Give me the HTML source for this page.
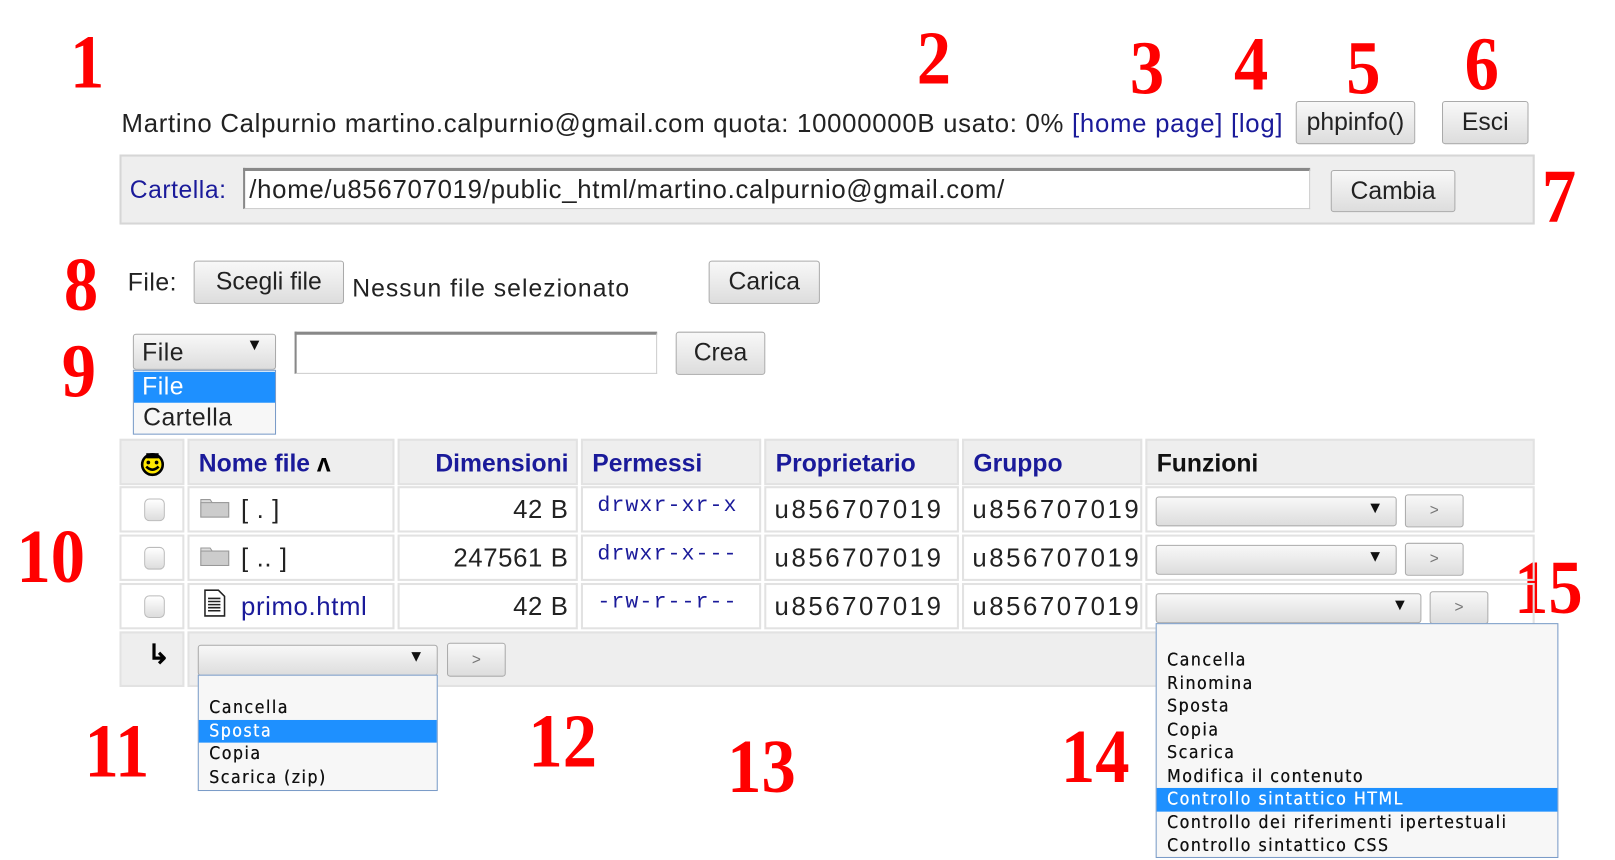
<!DOCTYPE html>
<html><head><meta charset="utf-8"><style>
html,body{margin:0;padding:0;background:#fff;width:1615px;height:860px;overflow:hidden}
#c{position:absolute;left:0;top:0;width:1560px;height:831px;transform:scale(1.030);transform-origin:0 0;font-family:"Liberation Sans",sans-serif;color:#222}
.a{position:absolute}
.n{position:absolute;font-family:"Liberation Serif",serif;font-weight:bold;color:#f00;font-size:74px;line-height:1;transform:scaleX(0.9);transform-origin:0 0}
.t{font-size:24px;white-space:nowrap;letter-spacing:0.5px}
.btn{position:absolute;border:1px solid #aaa;border-radius:3px;background:linear-gradient(#f8f8f8,#ddd);font-size:24px;text-align:center;box-sizing:border-box;color:#222}
.lnk{color:#1a1a9a}
.inp{position:absolute;background:#fff;border:1px solid #ccc;border-top:3px solid #888;border-left:2px solid #888;box-sizing:border-box}
.cell{position:absolute;border:2px solid #e2e2e2;box-sizing:border-box}
.hd{background:#eee;color:#1a1a9a;font-weight:bold;font-size:24px}
.sel{position:absolute;border:1px solid #aaa;border-radius:3px;background:linear-gradient(#f8f8f8,#ddd);box-sizing:border-box}
.sel:after{content:"▼";position:absolute;right:12px;top:2px;font-size:16px;color:#111}
.sb{position:absolute;border:1px solid #aaa;border-radius:3px;background:linear-gradient(#f8f8f8,#ddd);box-sizing:border-box;color:#777;font-size:15px;text-align:center}
.cb{position:absolute;width:20px;height:22px;border:1px solid #bbb;border-radius:5px;background:linear-gradient(#fff,#ddd);box-sizing:border-box}
.list{position:absolute;background:#f7f7f7;border:1px solid #7a9cc8;box-sizing:border-box;font-family:"DejaVu Sans Condensed","DejaVu Sans",sans-serif;font-size:17px;letter-spacing:1.5px;color:#111;text-shadow:0.3px 0 0 #111}
.list div{height:22.5px;line-height:22.5px;padding-left:10px}
.list .hl{text-shadow:0.3px 0 0 #fff}
.hl{background:#1e90ff;color:#fff}
.num{font-size:25px;white-space:nowrap;letter-spacing:0.6px}
.u{letter-spacing:2.5px}
.mono{font-family:"Liberation Mono",monospace;color:#1a1a9a;font-size:21px;letter-spacing:1px}
</style></head><body><div id="c">
<div class="n" style="left:68px;top:24px">1</div>
<div class="n" style="left:890px;top:20px">2</div>
<div class="n" style="left:1097px;top:30px">3</div>
<div class="n" style="left:1198px;top:26px">4</div>
<div class="n" style="left:1307px;top:30px">5</div>
<div class="n" style="left:1422px;top:26px">6</div>
<div class="n" style="left:1497px;top:154px">7</div>
<div class="n" style="left:62px;top:240px">8</div>
<div class="n" style="left:60px;top:324px">9</div>
<div class="n" style="left:16px;top:504px">10</div>
<div class="n" style="left:82px;top:693px">11</div>
<div class="n" style="left:513px;top:683px">12</div>
<div class="n" style="left:706px;top:708px">13</div>
<div class="n" style="left:1030px;top:698px">14</div>
<div class="n" style="left:1470px;top:534px">15</div>

<div class="a t" style="left:118px;top:106px;font-size:25px;letter-spacing:0.7px">Martino Calpurnio martino.calpurnio@gmail.com quota: 10000000B usato: 0% <span class="lnk">[home page] [log]</span></div>
<div class="btn" style="left:1258px;top:98px;width:116px;height:42px;line-height:40px">phpinfo()</div>
<div class="btn" style="left:1400px;top:98px;width:84px;height:42px;line-height:40px">Esci</div>

<div class="a" style="left:116px;top:150px;width:1374px;height:68px;background:#eee;border:2px solid #d6d6d6;box-sizing:border-box"></div>
<div class="a t lnk" style="left:126px;top:171px">Cartella:</div>
<div class="inp" style="left:236px;top:163px;width:1036px;height:40px"></div>
<div class="a t" style="left:242px;top:170px;font-size:25px;letter-spacing:0.7px">/home/u856707019/public_html/martino.calpurnio@gmail.com/</div>
<div class="btn" style="left:1292px;top:165px;width:121px;height:41px;line-height:39px">Cambia</div>

<div class="a t" style="left:124px;top:261px">File:</div>
<div class="btn" style="left:188px;top:253px;width:146px;height:42px;line-height:40px">Scegli file</div>
<div class="a t" style="left:342px;top:267px;letter-spacing:1px">Nessun file selezionato</div>
<div class="btn" style="left:688px;top:253px;width:108px;height:42px;line-height:40px">Carica</div>

<div class="sel" style="left:129px;top:324px;width:139px;height:35px"></div>
<div class="a t" style="left:138px;top:329px">File</div>
<div class="a" style="left:129px;top:359px;width:139px;height:63px;background:#f7f7f7;border:1px solid #7a9cc8;box-sizing:border-box"></div>
<div class="a t" style="left:130px;top:361px;width:137px;height:30px;background:#1e90ff;color:#fff;line-height:30px;text-indent:8px">File</div>
<div class="a t" style="left:139px;top:392px">Cartella</div>
<div class="inp" style="left:286px;top:322px;width:352px;height:41px"></div>
<div class="btn" style="left:656px;top:322px;width:87px;height:42px;line-height:40px">Crea</div>

<div class="cell hd" style="left:116px;top:426px;width:63px;height:45px"></div>
<svg class="a" style="left:135px;top:437px" width="26" height="26" viewBox="0 0 26 26"><circle cx="13" cy="14" r="10" fill="#ffe800" stroke="#000" stroke-width="2.5"/><rect x="7" y="3" width="12" height="5" fill="#000"/><circle cx="9" cy="12" r="1.8"/><circle cx="17" cy="12" r="1.8"/><path d="M7 16 Q13 22 19 16" stroke="#000" stroke-width="2.5" fill="none"/></svg>
<div class="cell hd" style="left:182px;top:426px;width:201px;height:45px;padding:9px 9px">Nome file <span style="color:#000">ʌ</span></div>
<div class="cell hd" style="left:386px;top:426px;width:175px;height:45px;padding:9px 7px;text-align:right">Dimensioni</div>
<div class="cell hd" style="left:564px;top:426px;width:175px;height:45px;padding:9px 9px">Permessi</div>
<div class="cell hd" style="left:742px;top:426px;width:189px;height:45px;padding:9px 9px">Proprietario</div>
<div class="cell hd" style="left:934px;top:426px;width:175px;height:45px;padding:9px 9px">Gruppo</div>
<div class="cell hd" style="left:1112px;top:426px;width:378px;height:45px;padding:9px 9px;color:#111">Funzioni</div>

<div class="cell" style="left:116px;top:472px;width:63px;height:45px"></div>
<div class="cell" style="left:182px;top:472px;width:201px;height:45px"></div>
<div class="cell" style="left:386px;top:472px;width:175px;height:45px"></div>
<div class="cell" style="left:564px;top:472px;width:175px;height:45px"></div>
<div class="cell" style="left:742px;top:472px;width:189px;height:45px"></div>
<div class="cell" style="left:934px;top:472px;width:175px;height:45px"></div>
<div class="cell" style="left:1112px;top:472px;width:378px;height:45px"></div>

<div class="cell" style="left:116px;top:519px;width:63px;height:45px"></div>
<div class="cell" style="left:182px;top:519px;width:201px;height:45px"></div>
<div class="cell" style="left:386px;top:519px;width:175px;height:45px"></div>
<div class="cell" style="left:564px;top:519px;width:175px;height:45px"></div>
<div class="cell" style="left:742px;top:519px;width:189px;height:45px"></div>
<div class="cell" style="left:934px;top:519px;width:175px;height:45px"></div>
<div class="cell" style="left:1112px;top:519px;width:378px;height:45px"></div>

<div class="cell" style="left:116px;top:566px;width:63px;height:45px"></div>
<div class="cell" style="left:182px;top:566px;width:201px;height:45px"></div>
<div class="cell" style="left:386px;top:566px;width:175px;height:45px"></div>
<div class="cell" style="left:564px;top:566px;width:175px;height:45px"></div>
<div class="cell" style="left:742px;top:566px;width:189px;height:45px"></div>
<div class="cell" style="left:934px;top:566px;width:175px;height:45px"></div>
<div class="cell" style="left:1112px;top:566px;width:378px;height:45px"></div>

<div class="cell" style="left:116px;top:613px;width:63px;height:54px;background:#eee"></div>
<div class="cell" style="left:182px;top:613px;width:1308px;height:54px;background:#eee"></div>
<div class="a" style="left:143px;top:620px;font-size:26px;font-weight:bold;color:#000">↳</div>

<div class="cb" style="left:140px;top:484px"></div>
<div class="cb" style="left:140px;top:531px"></div>
<div class="cb" style="left:140px;top:578px"></div>

<svg class="a" style="left:194px;top:480px" width="30" height="24"><path d="M1 5h9l2 3h16v14H1z" fill="#ddd" stroke="#999"/><rect x="1" y="8" width="27" height="14" fill="#ccc" stroke="#999"/></svg>
<svg class="a" style="left:194px;top:527px" width="30" height="24"><path d="M1 5h9l2 3h16v14H1z" fill="#ddd" stroke="#999"/><rect x="1" y="8" width="27" height="14" fill="#ccc" stroke="#999"/></svg>
<svg class="a" style="left:197px;top:572px" width="24" height="28"><path d="M2 1h13l6 6v19H2z" fill="#fff" stroke="#222" stroke-width="1.5"/><path d="M5 9h12M5 12h12M5 15h12M5 18h12M5 21h12" stroke="#222" stroke-width="1.5"/></svg>
<div class="a num" style="left:234px;top:481px">[ . ]</div>
<div class="a num" style="left:234px;top:528px">[ .. ]</div>
<div class="a num lnk" style="left:234px;top:575px">primo.html</div>

<div class="a num" style="left:386px;top:481px;width:166px;text-align:right">42 B</div>
<div class="a num" style="left:386px;top:528px;width:166px;text-align:right">247561 B</div>
<div class="a num" style="left:386px;top:575px;width:166px;text-align:right">42 B</div>

<div class="a mono" style="left:580px;top:480px">drwxr-xr-x</div>
<div class="a mono" style="left:580px;top:527px">drwxr-x---</div>
<div class="a mono" style="left:580px;top:574px">-rw-r--r--</div>

<div class="a num u" style="left:752px;top:481px">u856707019</div>
<div class="a num u" style="left:752px;top:528px">u856707019</div>
<div class="a num u" style="left:752px;top:575px">u856707019</div>
<div class="a num u" style="left:944px;top:481px">u856707019</div>
<div class="a num u" style="left:944px;top:528px">u856707019</div>
<div class="a num u" style="left:944px;top:575px">u856707019</div>

<div class="sel" style="left:1122px;top:482px;width:234px;height:29px"></div>
<div class="sb" style="left:1364px;top:480px;width:57px;height:32px;line-height:30px">&gt;</div>
<div class="sel" style="left:1122px;top:529px;width:234px;height:29px"></div>
<div class="sb" style="left:1364px;top:527px;width:57px;height:32px;line-height:30px">&gt;</div>
<div class="sel" style="left:1122px;top:576px;width:258px;height:29px"></div>
<div class="sb" style="left:1388px;top:574px;width:57px;height:32px;line-height:30px">&gt;</div>

<div class="sel" style="left:192px;top:626px;width:233px;height:30px"></div>
<div class="sb" style="left:434px;top:624px;width:57px;height:33px;line-height:31px">&gt;</div>

<div class="list" style="left:192px;top:655px;width:233px;height:113px;padding-top:20px">
<div>Cancella</div><div class="hl">Sposta</div><div>Copia</div><div>Scarica (zip)</div></div>

<div class="list" style="left:1122px;top:605px;width:391px;height:228px;padding-top:24px">
<div>Cancella</div><div>Rinomina</div><div>Sposta</div><div>Copia</div><div>Scarica</div><div>Modifica il contenuto</div><div class="hl">Controllo sintattico HTML</div><div>Controllo dei riferimenti ipertestuali</div><div>Controllo sintattico CSS</div></div>
</div></body></html>
